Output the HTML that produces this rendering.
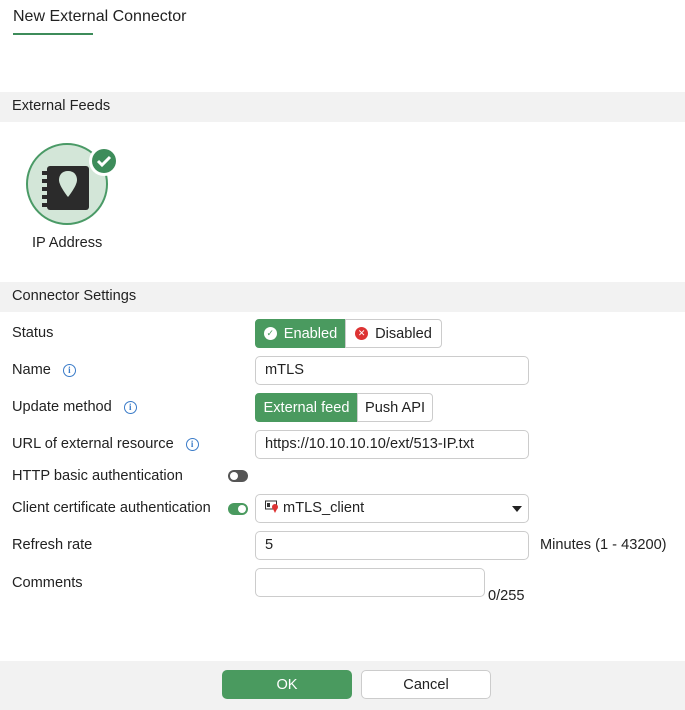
<!DOCTYPE html>
<html><head><meta charset="utf-8"><style>
*{box-sizing:border-box}
body{margin:0;width:685px;height:710px;background:#fff;font-family:"Liberation Sans",sans-serif;font-size:14.6px;color:#222;position:relative;overflow:hidden}
.a{position:absolute}
.sec{position:absolute;left:0;width:685px;height:30px;background:#f2f2f2;padding:6px 12px}
.lbl{position:absolute;left:12px}
.inp{position:absolute;left:255px;width:274px;height:29px;border:1px solid #ccc;border-radius:5px;padding:5px 9px;background:#fff}
.info{display:inline-block;width:13px;height:13px;border:1.3px solid #3a7bc8;border-radius:50%;color:#3a7bc8;font-size:9px;text-align:center;line-height:11px;font-weight:bold;vertical-align:1px;margin-left:12px;font-family:"Liberation Serif",serif}
.btn{position:absolute;height:29px;border:1px solid #ccc;border-radius:4px;display:flex;align-items:center;justify-content:center}
.ic{display:inline-block;width:13px;height:13px;border-radius:50%;font-size:9px;line-height:13px;text-align:center;margin-right:7px}
</style></head><body>
<div class="a" style="left:13px;top:8px;font-size:16px">New External Connector</div>
<div class="a" style="left:13px;top:33px;width:80px;height:2px;background:#3d8c5a"></div>
<div class="sec" style="top:92px">External Feeds</div>
<svg class="a" style="left:25px;top:142px" width="94" height="86" viewBox="0 0 94 86">
<circle cx="42" cy="42" r="40" fill="#d3e6d8" stroke="#4a9a66" stroke-width="2"/>
<rect x="22" y="24" width="42" height="44" rx="3" fill="#2b2b2b"/>
<rect x="17" y="29" width="5" height="4" fill="#2b2b2b"/><rect x="17" y="37" width="5" height="4" fill="#2b2b2b"/><rect x="17" y="45" width="5" height="4" fill="#2b2b2b"/><rect x="17" y="53" width="5" height="4" fill="#2b2b2b"/><rect x="17" y="61" width="5" height="4" fill="#2b2b2b"/>
<path d="M43 29c-6 0-9 4-9 9 0 6 9 17 9 17s9-11 9-17c0-5-3-9-9-9z" fill="#d3e6d8"/>
<circle cx="79" cy="19" r="15" fill="#fff"/>
<circle cx="79" cy="19" r="12" fill="#3d8c5a"/>
<path d="M73 19l4 4 8-8" stroke="#fff" stroke-width="3" fill="none"/>
</svg>
<div class="a" style="left:32px;top:235px">IP Address</div>
<div class="sec" style="top:282px">Connector Settings</div>
<div class="lbl" style="top:325px">Status</div>
<div class="btn" style="left:255px;top:319px;width:91px;background:#4a9a5f;color:#fff;border-color:#4a9a5f;border-radius:4px 0 0 4px">
<span class="ic" style="background:#fff;color:#4a9a5f">✓</span>Enabled</div>
<div class="btn" style="left:345px;top:319px;width:97px;border-radius:0 4px 4px 0">
<span class="ic" style="background:#d33;color:#fff">✕</span>Disabled</div>
<div class="lbl" style="top:362px">Name<span class="info">i</span></div>
<div class="inp" style="top:356px">mTLS</div>
<div class="lbl" style="top:399px">Update method<span class="info">i</span></div>
<div class="btn" style="left:255px;top:393px;width:103px;background:#4a9a5f;color:#fff;border-color:#4a9a5f;border-radius:4px 0 0 4px">External feed</div>
<div class="btn" style="left:357px;top:393px;width:76px;border-radius:0 4px 4px 0">Push API</div>
<div class="lbl" style="top:436px">URL of external resource<span class="info">i</span></div>
<div class="inp" style="top:430px">https://10.10.10.10/ext/513-IP.txt</div>
<div class="lbl" style="top:468px">HTTP basic authentication</div>
<div class="a" style="left:228px;top:470px;width:20px;height:12px;border-radius:6px;background:#555"><div class="a" style="left:2px;top:2px;width:8px;height:8px;border-radius:50%;background:#fff"></div></div>
<div class="lbl" style="top:500px">Client certificate authentication</div>
<div class="a" style="left:228px;top:503px;width:20px;height:12px;border-radius:6px;background:#4a9a5f"><div class="a" style="left:10px;top:2px;width:8px;height:8px;border-radius:50%;background:#fff"></div></div>
<div class="inp" style="top:494px;padding-left:9px"><svg width="14" height="13" viewBox="0 0 14 13" style="vertical-align:-1px"><rect x="0.5" y="1" width="11" height="8" fill="none" stroke="#333"/><rect x="2" y="3" width="3" height="4" fill="#333"/><circle cx="10" cy="7" r="3" fill="#d33"/><path d="M8 9l2 4 2-4z" fill="#d33"/></svg> mTLS_client
<span class="a" style="right:6px;top:11px;width:0;height:0;border-left:5px solid transparent;border-right:5px solid transparent;border-top:6px solid #222"></span></div>
<div class="lbl" style="top:537px">Refresh rate</div>
<div class="inp" style="top:531px">5</div>
<div class="a" style="left:540px;top:537px">Minutes (1 - 43200)</div>
<div class="lbl" style="top:575px">Comments</div>
<div class="a" style="left:255px;top:568px;width:230px;height:29px;border:1px solid #ccc;border-radius:5px"></div>
<div class="a" style="left:488px;top:588px">0/255</div>
<div class="a" style="left:0;top:661px;width:685px;height:49px;background:#f2f2f2"></div>
<div class="btn" style="left:222px;top:670px;width:130px;background:#4a9a5f;color:#fff;border-color:#4a9a5f;border-radius:5px">OK</div>
<div class="btn" style="left:361px;top:670px;width:130px;background:#fff;border-radius:5px">Cancel</div>
</body></html>
